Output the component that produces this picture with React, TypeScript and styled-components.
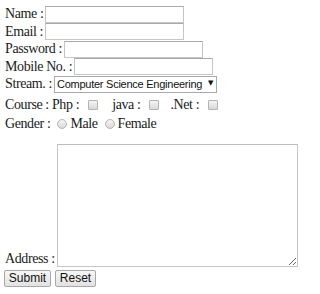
import React from 'react';
import styled, { createGlobalStyle } from 'styled-components';

const GlobalStyle = createGlobalStyle`
  html, body {
    margin: 0;
    padding: 0;
    background: #ffffff;
  }
  body {
    font-family: "Liberation Serif", "Times New Roman", serif;
    font-size: 14px;
    letter-spacing: -0.4px;
    color: #1a1a1a;
  }
`;

const Form = styled.form`
  display: flex;
  flex-direction: column;
  padding: 5px 0 0 5px;
`;

const Row = styled.div<{ $top?: number; $end?: boolean }>`
  display: flex;
  align-items: ${(p) => (p.$end ? 'flex-end' : 'baseline')};
  margin-top: ${(p) => p.$top ?? 0}px;
  line-height: 17px;
  white-space: pre;
`;

const TextInput = styled.input`
  box-sizing: border-box;
  width: 139px;
  height: 17px;
  margin: 0 0 0 2px;
  padding: 0 2px;
  border: 1px solid #c6c6c6;
  border-top-color: #a9a9a9;
  font-family: "Liberation Sans", Arial, sans-serif;
  font-size: 11px;
  background: #fff;
  outline: none;
`;

const SelectWrap = styled.span`
  position: relative;
  display: inline-block;
  margin-left: 2px;
`;

const Select = styled.select`
  appearance: none;
  box-sizing: border-box;
  width: 163px;
  height: 17px;
  padding: 0 10px 0 2px;
  border: 1px solid #a9a9a9;
  border-radius: 0;
  background: #fff;
  font-family: "Liberation Sans", Arial, sans-serif;
  font-size: 11px;
  letter-spacing: -0.25px;
  line-height: 15px;
  color: #111;
  outline: none;
`;

const Arrow = styled.span`
  position: absolute;
  right: 4px;
  top: 0;
  font-family: "DejaVu Sans", sans-serif;
  font-size: 7px;
  line-height: 17px;
  color: #111;
  pointer-events: none;
`;

const Check = styled.input`
  appearance: none;
  box-sizing: border-box;
  width: 10px;
  height: 10px;
  margin: 0 ${(p) => (p.type === 'radio' ? 3 : 0)}px 0 ${(p) => (p.type === 'radio' ? 7 : 9)}px;
  border: 1px solid #b4b4b4;
  border-radius: ${(p) => (p.type === 'radio' ? '50%' : '1px')};
  background: linear-gradient(#f4f4f4, #d9d9d9);
  align-self: center;
`;

const Gap = styled.span<{ $w: number }>`
  display: inline-block;
  width: ${(p) => p.$w}px;
`;

const TextArea = styled.textarea`
  box-sizing: border-box;
  width: 241px;
  height: 123px;
  margin: 0 0 0 2px;
  border: 1px solid #c6c6c6;
  border-top-color: #bdbdbd;
  resize: both;
  outline: none;
`;

const Buttons = styled.div`
  display: flex;
  gap: 4px;
  margin-top: 3px;
  margin-left: -1px;
`;

const Button = styled.button<{ $w: number }>`
  box-sizing: border-box;
  width: ${(p) => p.$w}px;
  height: 17px;
  padding: 0;
  border: 1px solid #a8a8a8;
  border-radius: 2px;
  background: linear-gradient(#f7f7f7, #e2e2e2);
  font-family: "Liberation Sans", Arial, sans-serif;
  font-size: 12px;
  letter-spacing: 0;
  line-height: 15px;
  color: #111;
`;

const App: React.FC = () => {
  return (
    <>
      <GlobalStyle />
      <Form onSubmit={(e) => e.preventDefault()}>
        <Row>
          Name :<TextInput type="text" />
        </Row>
        <Row>
          Email :<TextInput type="text" />
        </Row>
        <Row>
          Password :<TextInput type="password" />
        </Row>
        <Row>
          Mobile No. :<TextInput type="text" />
        </Row>
        <Row>
          Stream. :
          <SelectWrap>
            <Select defaultValue="cse">
              <option value="cse">Computer Science Engineering</option>
              <option value="it">Information Technology</option>
            </Select>
            <Arrow>▼</Arrow>
          </SelectWrap>
        </Row>
        <Row $top={3}>
          Course : Php :<Check type="checkbox" />
          <Gap $w={14} />java :<Check type="checkbox" />
          <Gap $w={11} />.Net :<Check type="checkbox" />
        </Row>
        <Row $top={2}>
          Gender :<Check type="radio" name="g" />Male<Check type="radio" name="g" />Female
        </Row>
        <Row $top={12} $end>
          Address :<TextArea />
        </Row>
        <Buttons>
          <Button type="submit" $w={47}>Submit</Button>
          <Button type="reset" $w={41}>Reset</Button>
        </Buttons>
      </Form>
    </>
  );
};

export default App;
